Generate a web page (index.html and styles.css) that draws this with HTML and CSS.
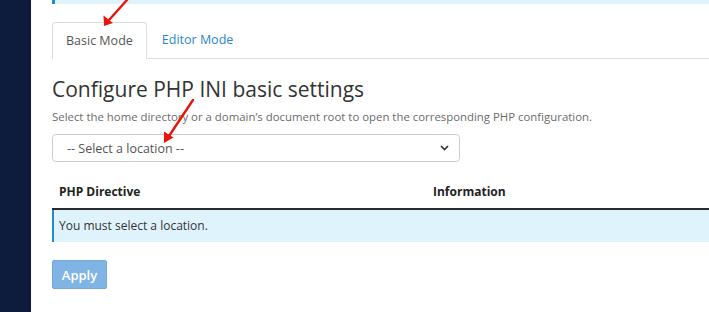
FILE: index.html
```html
<!DOCTYPE html>
<html>
<head>
<meta charset="utf-8">
<link rel="stylesheet" href="styles.css">
</head>
<body>
<div class="layout">
  <aside class="sidebar"></aside>
  <main class="main">
    <div class="alert-strip"></div>
    <ul class="tabs">
      <li class="tab active">Basic Mode</li>
      <li class="tab link">Editor Mode</li>
    </ul>
    <h1 class="title">Configure PHP INI basic settings</h1>
    <p class="desc">Select the home directory or a domain’s document root to open the corresponding PHP configuration.</p>
    <div class="select">
      <span>-- Select a location --</span>
      <svg class="chev" width="9" height="6" viewBox="0 0 9 6"><path d="M1 1 L4.5 4.5 L8 1" fill="none" stroke="#333" stroke-width="1.7"/></svg>
    </div>
    <div class="table">
      <div class="thead">
        <div class="th c1">PHP Directive</div>
        <div class="th c2">Information</div>
      </div>
      <div class="info-row">You must select a location.</div>
    </div>
    <button class="btn">Apply</button>
  </main>
</div>
<svg class="arrows" width="709" height="312" viewBox="0 0 709 312">
  <g stroke="#e8150d" stroke-width="2.4" fill="#e8150d" stroke-linecap="round">
    <line x1="127" y1="0" x2="109" y2="20"/>
    <polygon points="104,26 103.5,15.5 113,23" stroke="none"/>
    <line x1="193" y1="100" x2="169" y2="136"/>
    <polygon points="164,143 164,131.5 173.5,137.5" stroke="none"/>
  </g>
</svg>
</body>
</html>
```
FILE: styles.css
```css
html, body {
  margin: 0;
  padding: 0;
  background: #fff;
  font-family: "Open Sans", "Liberation Sans", sans-serif;
  color: #333;
  overflow: hidden;
}
.layout {
  display: flex;
  height: 312px;
}
.sidebar {
  width: 31px;
  flex: none;
  background: #0d1b3c;
}
.main {
  flex: 1;
  padding-left: 21px;
  min-width: 0;
}
.alert-strip {
  height: 4px;
  background: #dff3fd;
  border-left: 3px solid #1f8ad6;
}
.tabs {
  list-style: none;
  margin: 18px 0 0;
  padding: 0;
  display: flex;
  border-bottom: 1px solid #dddddd;
  height: 36px;
}
.tab {
  font-size: 12.5px;
  line-height: 35px;
  padding: 0 13px;
  height: 36px;
  box-sizing: border-box;
}
.tab.active {
  color: #555;
  border: 1px solid #dddddd;
  border-bottom-color: #fff;
  border-radius: 4px 4px 0 0;
  background: #fff;
  height: 37px;
  margin-bottom: -1px;
}
.tab.link {
  color: #2a86cf;
  padding-left: 15px;
}
.title {
  font-size: 21px;
  font-weight: 400;
  color: #333;
  margin: 15px 0 0;
  line-height: 30px;
}
.desc {
  font-size: 11.4px;
  color: #6b6b6b;
  margin: 5px 0 0;
  line-height: 16px;
}
.select {
  margin-top: 9px;
  width: 408px;
  height: 28px;
  box-sizing: border-box;
  border: 1px solid #cccccc;
  border-radius: 4px;
  display: flex;
  align-items: center;
  justify-content: space-between;
  padding: 0 10px 0 14px;
  font-size: 12.5px;
  color: #555;
}
.chev { display: block; }
.table {
  margin-top: 16px;
}
.thead {
  display: flex;
  height: 30px;
  box-sizing: content-box;
  align-items: center;
  padding-bottom: 0;
  border-bottom: 2px solid #2b2b2b;
  font-size: 12px;
  font-weight: 700;
  color: #222;
}
.th { padding: 0 7px 4px; }
.c1 { width: 360px; }
.info-row {
  height: 32px;
  box-sizing: border-box;
  background: #dff3fd;
  border-left: 2px solid #1f8ad6;
  padding-left: 5px;
  font-size: 12px;
  line-height: 32px;
  color: #333;
}
.btn {
  margin-top: 18px;
  width: 55px;
  height: 29px;
  background: #7fb4e4;
  border: 1px solid #72a9dd;
  border-radius: 2px;
  color: #fff;
  font-family: "Open Sans", "Liberation Sans", sans-serif;
  font-size: 13px;
  font-weight: 600;
  padding: 0;
}
.arrows {
  position: absolute;
  left: 0;
  top: 0;
  pointer-events: none;
}
```
